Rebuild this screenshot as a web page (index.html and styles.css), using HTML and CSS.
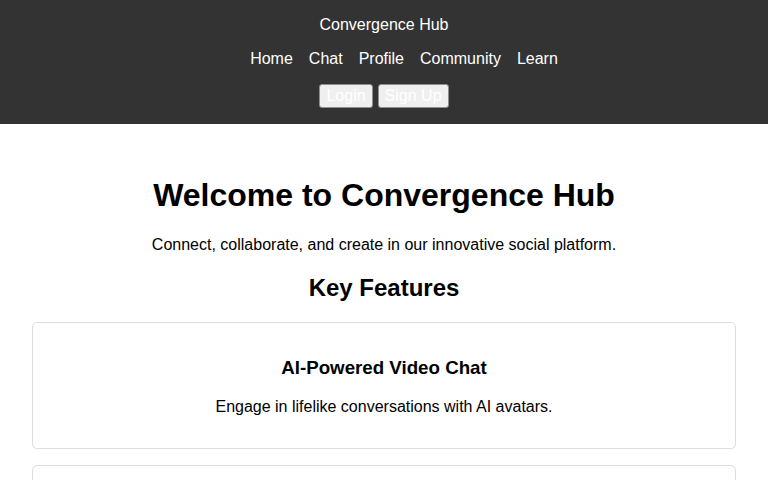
FILE: index.html
```html
<!DOCTYPE html>
<html lang="en">
<head>
<meta charset="utf-8">
<title>Convergence Hub</title>
<link rel="stylesheet" href="styles.css">
</head>
<body>
<header class="site-header">
  <div class="logo">Convergence Hub</div>
  <nav>
    <ul class="main-nav">
      <li><a href="#">Home</a></li>
      <li><a href="#">Chat</a></li>
      <li><a href="#">Profile</a></li>
      <li><a href="#">Community</a></li>
      <li><a href="#">Learn</a></li>
    </ul>
  </nav>
  <div class="auth">
    <button class="auth-btn">Login</button>
    <button class="auth-btn">Sign Up</button>
  </div>
</header>
<main class="content">
  <h2 class="hero-title">Welcome to Convergence Hub</h2>
  <p class="hero-text">Connect, collaborate, and create in our innovative social platform.</p>
  <h2 class="section-title">Key Features</h2>
  <div class="feature">
    <h3>AI-Powered Video Chat</h3>
    <p>Engage in lifelike conversations with AI avatars.</p>
  </div>
  <div class="feature">
    <h3>Immersive Communities</h3>
    <p>Join spaces built around your interests.</p>
  </div>
</main>
</body>
</html>
```

FILE: styles.css
```css
body {
  margin: 0;
  font-family: "Liberation Sans", Arial, sans-serif;
  color: #000;
  background: #fff;
}
.site-header {
  background: #333;
  color: #fff;
  padding: 16px;
  text-align: center;
}
.logo {
  font-size: 16px;
}
.main-nav {
  display: flex;
  justify-content: center;
  gap: 16px;
  list-style: none;
  margin: 16px 0;
  padding: 0 0 0 40px;
}
.main-nav a {
  color: #fff;
  text-decoration: none;
}
.auth {
  display: flex;
  justify-content: center;
  gap: 5px;
}
.auth-btn {
  font-family: "Liberation Sans", Arial, sans-serif;
  font-size: 16px;
  line-height: 18px;
  color: #fff;
  background: #efefef;
  border: 1px solid #8f8f8f;
  border-radius: 3px;
  padding: 2px 6px;
}
.content {
  padding: 32px;
  text-align: center;
}
.hero-title {
  font-size: 32px;
  margin: 21.44px 0;
}
.hero-text {
  margin: 16px 0;
}
.section-title {
  font-size: 24px;
  margin: 19.92px 0;
}
.feature {
  border: 1px solid #ddd;
  border-radius: 5px;
  padding: 16px;
  margin-bottom: 16px;
}
.feature h3 {
  font-size: 18.72px;
  margin: 18.72px 0;
}
.feature p {
  margin: 16px 0;
}
```
